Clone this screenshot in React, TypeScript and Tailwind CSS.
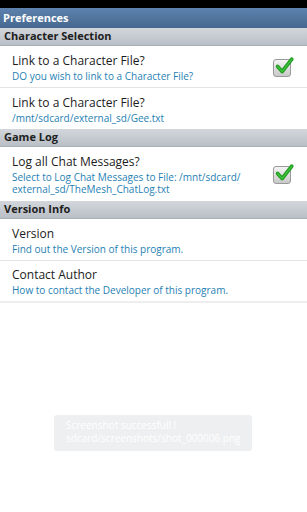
import React from "react";

const font = { fontFamily: '"Open Sans", "Noto Sans", sans-serif' };

function Check() {
  return (
    <div className="relative w-[20px] h-[20px] mr-[14px] shrink-0">
      <div className="absolute left-0 top-[2px] w-[18px] h-[18px] rounded-[3px] border border-[#9a9a9a] bg-gradient-to-b from-[#f4f4f4] to-[#c8c8c8]" />
      <svg className="absolute left-0 -top-[2px]" width="22" height="22" viewBox="0 0 24 24">
        <path d="M5 12.5 L10 18 L20.5 4.5" fill="none" stroke="#1f9a1f" strokeWidth="4" strokeLinecap="round" strokeLinejoin="round" />
        <path d="M5 12.5 L10 18 L20.5 4.5" fill="none" stroke="#3fc23f" strokeWidth="1.5" strokeLinecap="round" strokeLinejoin="round" />
      </svg>
    </div>
  );
}

function Header({ label }: { label: string }) {
  return (
    <div className="h-[18px] flex items-center px-[4px] bg-gradient-to-b from-[#d3d7dc] to-[#b9bfc6] border-b border-[#a9afb6]">
      <span className="text-[11px] font-bold text-[#202020]">{label}</span>
    </div>
  );
}

function Title({ children }: { children: React.ReactNode }) {
  return <div className="text-[12px] leading-[17px] text-[#1c1c1c]">{children}</div>;
}

function Sub({ children }: { children: React.ReactNode }) {
  return <div className="text-[10px] leading-[12px] text-[#1f7fb4] mt-[1px]">{children}</div>;
}

export default function App() {
  return (
    <div className="w-[307px] h-[512px] bg-white relative overflow-hidden" style={font}>
      <div className="h-[8px] bg-black" />
      <div className="h-[20px] flex items-center px-[3px] bg-gradient-to-b from-[#5d82ad] to-[#46688f]">
        <span className="text-[11px] font-bold text-white">Preferences</span>
      </div>

      <Header label="Character Selection" />
      <div className="h-[42px] flex items-center border-b border-[#e4e4e4]">
        <div className="flex-1 pl-[12px]">
          <Title>Link to a Character File?</Title>
          <Sub>DO you wish to link to a Character File?</Sub>
        </div>
        <Check />
      </div>
      <div className="h-[41px] flex items-center pl-[12px]">
        <div>
          <Title>Link to a Character File?</Title>
          <Sub>/mnt/sdcard/external_sd/Gee.txt</Sub>
        </div>
      </div>

      <Header label="Game Log" />
      <div className="h-[54px] flex items-center">
        <div className="flex-1 pl-[12px] pr-[10px]">
          <Title>Log all Chat Messages?</Title>
          <Sub>Select to Log Chat Messages to File: /mnt/sdcard/ external_sd/TheMesh_ChatLog.txt</Sub>
        </div>
        <Check />
      </div>

      <Header label="Version Info" />
      <div className="h-[42px] flex items-center pl-[12px] border-b border-[#e4e4e4]">
        <div>
          <Title>Version</Title>
          <Sub>Find out the Version of this program.</Sub>
        </div>
      </div>
      <div className="h-[42px] flex items-center pl-[12px] border-b-2 border-[#eeeeee]">
        <div>
          <Title>Contact Author</Title>
          <Sub>How to contact the Developer of this program.</Sub>
        </div>
      </div>

      <div className="absolute left-[54px] top-[415px] w-[198px] h-[36px] rounded-[3px] bg-[#eeeff0] px-[12px] py-[4px]">
        <div className="text-[10px] leading-[13px] text-white">Screenshot successfull !</div>
        <div className="text-[10px] leading-[13px] text-white">sdcard/screenshots/shot_000006.png</div>
      </div>
    </div>
  );
}
